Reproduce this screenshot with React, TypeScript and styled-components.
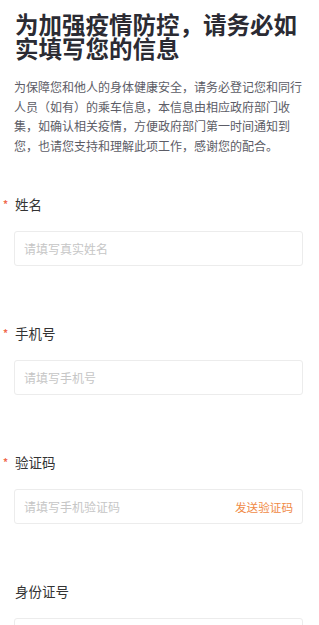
import React from "react";
import styled, { createGlobalStyle } from "styled-components";

const Global = createGlobalStyle`
  html, body { margin: 0; padding: 0; background: #fff; }
  body { font-family: "Noto Sans CJK SC", "Noto Sans", sans-serif; -webkit-font-smoothing: antialiased; }
  * { box-sizing: border-box; }
`;

const Page = styled.div`
  padding: 12px 16px 0 14px;
  display: flex;
  flex-direction: column;
`;

const Title = styled.h1`
  margin: 0 0 0 1px;
  font-size: 23.5px;
  line-height: 24px;
  font-weight: 700;
  color: #2b2b33;
`;

const Intro = styled.p`
  margin: 17px 0 0 0;
  font-size: 12px;
  line-height: 19.5px;
  color: #5c5c66;
`;

const Field = styled.div<{ $first?: boolean }>`
  margin-top: ${(p) => (p.$first ? "39px" : "57px")};
  display: flex;
  flex-direction: column;
  gap: 17px;
`;

const Label = styled.div`
  position: relative;
  padding-left: 1px;
  font-size: 13.5px;
  line-height: 20px;
  color: #333;
`;

const Star = styled.span`
  position: absolute;
  left: -11px;
  top: 0px;
  font-size: 10px;
  font-weight: 700;
  color: #f06a4f;
`;

const InputBox = styled.div`
  height: 35px;
  border: 1px solid #ececec;
  border-radius: 3px;
  display: flex;
  align-items: center;
  padding: 0 9px 0 9px;
`;

const Input = styled.input`
  flex: 1;
  min-width: 0;
  border: 0;
  outline: none;
  background: transparent;
  font-family: inherit;
  font-size: 12px;
  color: #333;
  padding: 0;
  &::placeholder { color: #c6c6c6; }
`;

const SendCode = styled.span`
  font-size: 11.6px;
  color: #f08a46;
  white-space: nowrap;
`;

const fields = [
  { label: "姓名", placeholder: "请填写真实姓名", required: true },
  { label: "手机号", placeholder: "请填写手机号", required: true },
  { label: "验证码", placeholder: "请填写手机验证码", required: true, code: true },
  { label: "身份证号", placeholder: "请填写身份证号", required: false },
];

export default function App() {
  return (
    <>
      <Global />
      <Page>
        <Title>为加强疫情防控，请务必如实填写您的信息</Title>
        <Intro>
          为保障您和他人的身体健康安全，请务必登记您和同行人员（如有）的乘车信息，本信息由相应政府部门收集，如确认相关疫情，方便政府部门第一时间通知到您，也请您支持和理解此项工作，感谢您的配合。
        </Intro>
        {fields.map((f, i) => (
          <Field key={f.label} $first={i === 0}>
            <Label>
              {f.required && <Star>*</Star>}
              {f.label}
            </Label>
            <InputBox>
              <Input placeholder={f.placeholder} />
              {f.code && <SendCode>发送验证码</SendCode>}
            </InputBox>
          </Field>
        ))}
      </Page>
    </>
  );
}
